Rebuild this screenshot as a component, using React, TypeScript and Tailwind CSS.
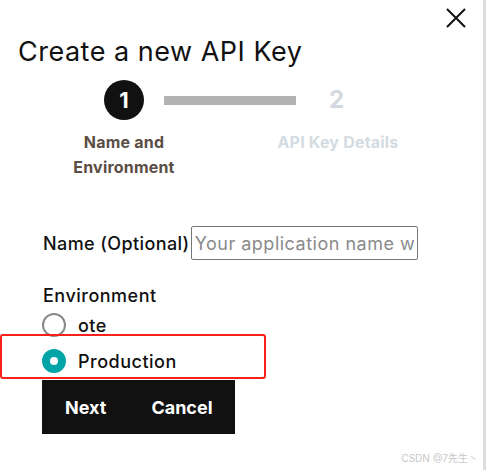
import React from "react";

export default function App() {
  return (
    <div
      className="relative w-[486px] h-[470px] bg-white overflow-hidden"
      style={{ fontFamily: "Inter, 'Noto Sans', 'Noto Sans CJK SC', sans-serif" }}
    >
      <div className="absolute right-0 top-0 h-full w-[3px] bg-[#dddddd]" />
      <button className="absolute left-[444px] top-[6px] w-[24px] h-[24px] flex items-center justify-center">
        <svg width="22" height="22" viewBox="0 0 22 22" fill="none" stroke="#111" strokeWidth="2">
          <path d="M2 2 L20 20 M20 2 L2 20" />
        </svg>
      </button>

      <h1 className="pt-[35px] pl-[18px] text-[27px] leading-[33px] tracking-[0.5px] font-normal text-[#111]">
        Create a new API Key
      </h1>

      <div className="mt-[12px] flex items-center pl-[104px]">
        <div className="w-[40px] h-[40px] rounded-full bg-[#111] flex items-center justify-center text-white text-[22px] font-bold">
          1
        </div>
        <div className="ml-[20px] w-[132px] h-[9px] bg-[#b3b3b3]" />
        <div className="ml-[33px] text-[24px] font-bold text-[#d3d9df]">2</div>
      </div>

      <div className="mt-[10px] flex pl-[54px]">
        <div className="w-[140px] text-center text-[16px] leading-[25px] tracking-[0.2px] font-bold text-[#5a4e45]">
          Name and
          <br />
          Environment
        </div>
        <div className="ml-[62px] w-[164px] text-center text-[16px] leading-[25px] tracking-[0.2px] font-bold text-[#d4dbe1]">
          API Key Details
        </div>
      </div>

      <div className="mt-[46px] pl-[43px] flex items-center">
        <label className="text-[18px] tracking-[0.4px] font-medium text-[#111]">Name (Optional)</label>
        <input
          className="ml-[1px] w-[227px] h-[34px] border border-[#767676] rounded-[2px] px-[3px] text-[18px] tracking-[0.5px] placeholder:text-[#8a8a8a] outline-none"
          placeholder="Your application name will appear here"
        />
      </div>

      <div className="mt-[25px] pl-[43px] text-[18px] leading-[22px] tracking-[0.5px] font-medium text-[#111]">
        Environment
      </div>

      <div className="pl-[42px] flex flex-col">
        <label className="flex items-center h-[36px]">
          <span className="w-[24px] h-[24px] rounded-full border-2 border-[#8a8a8a]" />
          <span className="ml-[12px] text-[18px] tracking-[0.5px] font-medium text-[#111]">ote</span>
        </label>
        <label className="flex items-center h-[36px]">
          <span className="w-[24px] h-[24px] rounded-full border-[8px] border-[#00a4a6] bg-white" />
          <span className="ml-[12px] text-[18px] tracking-[0.5px] font-medium text-[#111]">Production</span>
        </label>
      </div>

      <div className="ml-[42px] mt-[1px] inline-flex bg-[#111] h-[54px]">
        <button className="px-[23px] text-[18px] font-bold text-white">Next</button>
        <button className="px-[22px] text-[18px] font-bold text-white">Cancel</button>
      </div>

      <div className="absolute left-0 top-[334px] w-[266px] h-[45px] border-2 border-[#f5211a] rounded-[3px]" />

      <div className="absolute right-[8px] top-[452px] whitespace-nowrap text-[10px] leading-[13px] text-[#c8c8c8]">
        CSDN @7先生丶
      </div>
    </div>
  );
}
